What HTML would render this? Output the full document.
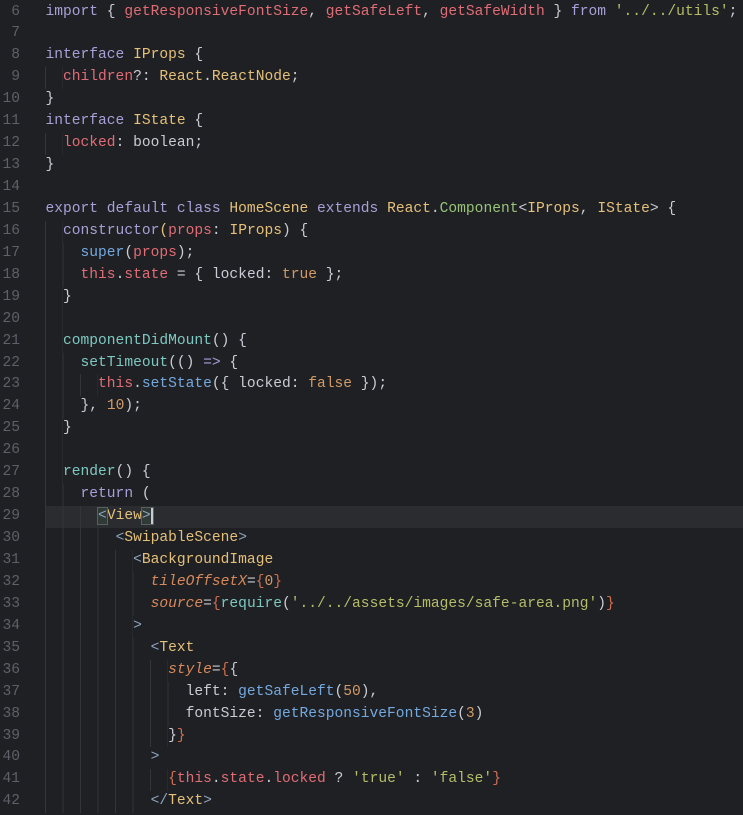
<!DOCTYPE html>
<html><head><meta charset="utf-8"><style>
html,body{margin:0;padding:0;background:#1f2023;width:743px;height:815px;overflow:hidden}
.ed{position:relative;top:1.5px;font-family:"Liberation Mono",monospace;font-size:14.6px;}
.l{position:absolute;left:0;height:21.94px;line-height:21.94px;width:743px;white-space:pre;}
.n{position:absolute;left:0;width:20px;text-align:right;color:#5d6068}
.c{position:absolute;left:45.5px;color:#c8ccd4}
.g{position:absolute;left:45px;top:0;height:21.94px;background:repeating-linear-gradient(to right,#333539 0 1px,transparent 1px 17.52px)}
.hl{background:#2b2c30}
.k{color:#a99fd8}.r{color:#e06c75}.y{color:#e5c07b}.b{color:#74a9e0}.t{color:#7ec8c2}
.s{color:#b5bd68}.o{color:#d19a66}.gr{color:#98c379}.p{color:#c8ccd4}.tg{color:#8fa3bf}
.a{color:#d9895b;font-style:italic}.br{color:#d16d4f}.w{color:#c8ccd4}
.bx{outline:1px solid #5a6060;background:#2f3a36}
.cur{border-right:2px solid #c8ccd4}
</style></head><body><div class="ed">
<div class="l" style="top:0px"><span class="n">6</span><span class="c"><span class="k">import</span> { <span class="r">getResponsiveFontSize</span>, <span class="r">getSafeLeft</span>, <span class="r">getSafeWidth</span> } <span class="k">from</span> <span class="s">'../../utils'</span>;</span></div>
<div class="l" style="top:21.94px"><span class="n">7</span></div>
<div class="l" style="top:43.88px"><span class="n">8</span><span class="c"><span class="k">interface</span> <span class="y">IProps</span> {</span></div>
<div class="l" style="top:65.82px"><span class="n">9</span><span class="g" style="width:17.52px"></span><span class="c">  <span class="r">children</span>?: <span class="y">React</span>.<span class="y">ReactNode</span>;</span></div>
<div class="l" style="top:87.76px"><span class="n">10</span><span class="c">}</span></div>
<div class="l" style="top:109.7px"><span class="n">11</span><span class="c"><span class="k">interface</span> <span class="y">IState</span> {</span></div>
<div class="l" style="top:131.64px"><span class="n">12</span><span class="g" style="width:17.52px"></span><span class="c">  <span class="r">locked</span>: boolean;</span></div>
<div class="l" style="top:153.58px"><span class="n">13</span><span class="c">}</span></div>
<div class="l" style="top:175.52px"><span class="n">14</span></div>
<div class="l" style="top:197.46px"><span class="n">15</span><span class="c"><span class="k">export default class</span> <span class="y">HomeScene</span> <span class="k">extends</span> <span class="y">React</span>.<span class="gr">Component</span>&lt;<span class="y">IProps</span>, <span class="y">IState</span>&gt; {</span></div>
<div class="l" style="top:219.4px"><span class="n">16</span><span class="g" style="width:17.52px"></span><span class="c">  <span class="k">constructor</span><span class="y">(</span><span class="r">props</span>: <span class="y">IProps</span>) {</span></div>
<div class="l" style="top:241.34px"><span class="n">17</span><span class="g" style="width:35.04px"></span><span class="c">    <span class="b">super</span>(<span class="r">props</span>);</span></div>
<div class="l" style="top:263.28px"><span class="n">18</span><span class="g" style="width:35.04px"></span><span class="c">    <span class="r">this</span>.<span class="r">state</span> = { locked: <span class="o">true</span> };</span></div>
<div class="l" style="top:285.22px"><span class="n">19</span><span class="g" style="width:17.52px"></span><span class="c">  }</span></div>
<div class="l" style="top:307.16px"><span class="n">20</span><span class="g" style="width:17.52px"></span></div>
<div class="l" style="top:329.1px"><span class="n">21</span><span class="g" style="width:17.52px"></span><span class="c">  <span class="t">componentDidMount</span>() {</span></div>
<div class="l" style="top:351.04px"><span class="n">22</span><span class="g" style="width:35.04px"></span><span class="c">    <span class="t">setTimeout</span>(() <span class="k">=&gt;</span> {</span></div>
<div class="l" style="top:372.98px"><span class="n">23</span><span class="g" style="width:52.56px"></span><span class="c">      <span class="r">this</span>.<span class="b">setState</span>({ locked: <span class="o">false</span> });</span></div>
<div class="l" style="top:394.92px"><span class="n">24</span><span class="g" style="width:35.04px"></span><span class="c">    }, <span class="o">10</span>);</span></div>
<div class="l" style="top:416.86px"><span class="n">25</span><span class="g" style="width:17.52px"></span><span class="c">  }</span></div>
<div class="l" style="top:438.8px"><span class="n">26</span><span class="g" style="width:17.52px"></span></div>
<div class="l" style="top:460.74px"><span class="n">27</span><span class="g" style="width:17.52px"></span><span class="c">  <span class="t">render</span>() {</span></div>
<div class="l" style="top:482.68px"><span class="n">28</span><span class="g" style="width:35.04px"></span><span class="c">    <span class="k">return</span> (</span></div>
<div class="l" style="top:504.62px"><span class="n">29</span><span class="hl" style="position:absolute;left:45px;right:0;top:0;bottom:0"></span><span class="g" style="width:52.56px"></span><span class="c">      <span class="tg bx">&lt;</span><span class="y">View</span><span class="tg bx cur">&gt;</span></span></div>
<div class="l" style="top:526.56px"><span class="n">30</span><span class="g" style="width:70.08px"></span><span class="c">        <span class="tg">&lt;</span><span class="y">SwipableScene</span><span class="tg">&gt;</span></span></div>
<div class="l" style="top:548.5px"><span class="n">31</span><span class="g" style="width:87.6px"></span><span class="c">          <span class="tg">&lt;</span><span class="y">BackgroundImage</span></span></div>
<div class="l" style="top:570.44px"><span class="n">32</span><span class="g" style="width:105.12px"></span><span class="c">            <span class="a">tileOffsetX</span>=<span class="br">{</span><span class="o">0</span><span class="br">}</span></span></div>
<div class="l" style="top:592.38px"><span class="n">33</span><span class="g" style="width:105.12px"></span><span class="c">            <span class="a">source</span>=<span class="br">{</span><span class="t">require</span>(<span class="s">'../../assets/images/safe-area.png'</span>)<span class="br">}</span></span></div>
<div class="l" style="top:614.32px"><span class="n">34</span><span class="g" style="width:87.6px"></span><span class="c">          <span class="tg">&gt;</span></span></div>
<div class="l" style="top:636.26px"><span class="n">35</span><span class="g" style="width:105.12px"></span><span class="c">            <span class="tg">&lt;</span><span class="y">Text</span></span></div>
<div class="l" style="top:658.2px"><span class="n">36</span><span class="g" style="width:122.64px"></span><span class="c">              <span class="a">style</span>=<span class="br">{</span>{</span></div>
<div class="l" style="top:680.14px"><span class="n">37</span><span class="g" style="width:140.16px"></span><span class="c">                left: <span class="b">getSafeLeft</span>(<span class="o">50</span>),</span></div>
<div class="l" style="top:702.08px"><span class="n">38</span><span class="g" style="width:140.16px"></span><span class="c">                fontSize: <span class="b">getResponsiveFontSize</span>(<span class="o">3</span>)</span></div>
<div class="l" style="top:724.02px"><span class="n">39</span><span class="g" style="width:122.64px"></span><span class="c">              }<span class="br">}</span></span></div>
<div class="l" style="top:745.96px"><span class="n">40</span><span class="g" style="width:105.12px"></span><span class="c">            <span class="tg">&gt;</span></span></div>
<div class="l" style="top:767.9px"><span class="n">41</span><span class="g" style="width:122.64px"></span><span class="c">              <span class="br">{</span><span class="r">this</span>.<span class="r">state</span>.<span class="r">locked</span> ? <span class="s">'true'</span> : <span class="s">'false'</span><span class="br">}</span></span></div>
<div class="l" style="top:789.84px"><span class="n">42</span><span class="g" style="width:105.12px"></span><span class="c">            <span class="tg">&lt;/</span><span class="y">Text</span><span class="tg">&gt;</span></span></div>
</div></body></html>
